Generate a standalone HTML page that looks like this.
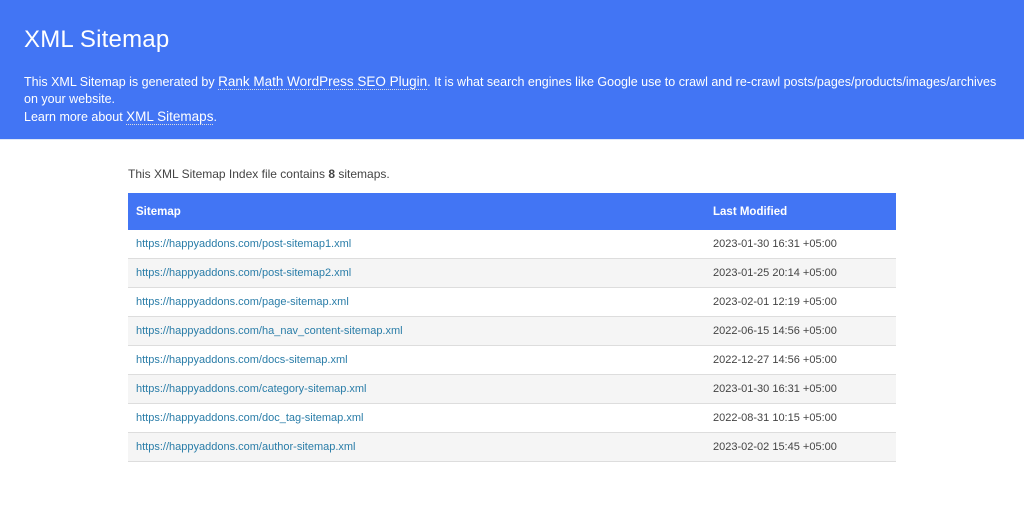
<!DOCTYPE html>
<html><head><meta charset="utf-8"><style>
html,body{margin:0;padding:0;background:#fff;}
body{font-family:"Liberation Sans",sans-serif;color:#444;width:1024px;height:531px;overflow:hidden;}
#hd{background:#4275f4;height:140px;color:#fff;padding:0 24px;box-sizing:border-box;position:relative;border-bottom:1px solid #e0e8f8;}
h1{font-size:24px;font-weight:normal;margin:0;position:absolute;top:26px;left:24px;letter-spacing:0.2px;}
.p{position:absolute;left:24px;font-size:12.5px;line-height:17px;white-space:nowrap;}
.p a{color:#fff;text-decoration:none;border-bottom:1px dotted #ddd;font-size:13.5px;}
#intro{position:absolute;top:167px;left:128px;font-size:12px;color:#444;}
table{position:absolute;top:193px;left:128px;width:768px;border-collapse:collapse;font-size:11px;}
th{background:#4275f4;color:#fff;text-align:left;height:37px;padding:0 8px;font-size:11.5px;}
td{height:28px;padding:0 8px;border-bottom:1px solid #ddd;}
tr:nth-child(odd) td{background:#f5f5f5;}
td a{color:#2a7da8;text-decoration:none;}
td.d{color:#444;}
</style></head><body>
<div id="hd">
<h1>XML Sitemap</h1>
<div class="p" style="top:73px">This XML Sitemap is generated by <a>Rank Math WordPress SEO Plugin</a>. It is what search engines like Google use to crawl and re-crawl posts/pages/products/images/archives<br>on your website.</div>
<div class="p" style="top:108px">Learn more about <a>XML Sitemaps</a>.</div>
</div>
<div id="intro">This XML Sitemap Index file contains <b>8</b> sitemaps.</div>
<table>
<tr><th style="width:561px">Sitemap</th><th>Last Modified</th></tr>
<tr><td><a>https://happyaddons.com/post-sitemap1.xml</a></td><td class="d">2023-01-30 16:31 +05:00</td></tr>
<tr><td><a>https://happyaddons.com/post-sitemap2.xml</a></td><td class="d">2023-01-25 20:14 +05:00</td></tr>
<tr><td><a>https://happyaddons.com/page-sitemap.xml</a></td><td class="d">2023-02-01 12:19 +05:00</td></tr>
<tr><td><a>https://happyaddons.com/ha_nav_content-sitemap.xml</a></td><td class="d">2022-06-15 14:56 +05:00</td></tr>
<tr><td><a>https://happyaddons.com/docs-sitemap.xml</a></td><td class="d">2022-12-27 14:56 +05:00</td></tr>
<tr><td><a>https://happyaddons.com/category-sitemap.xml</a></td><td class="d">2023-01-30 16:31 +05:00</td></tr>
<tr><td><a>https://happyaddons.com/doc_tag-sitemap.xml</a></td><td class="d">2022-08-31 10:15 +05:00</td></tr>
<tr><td><a>https://happyaddons.com/author-sitemap.xml</a></td><td class="d">2023-02-02 15:45 +05:00</td></tr>
</table>
</body></html>
